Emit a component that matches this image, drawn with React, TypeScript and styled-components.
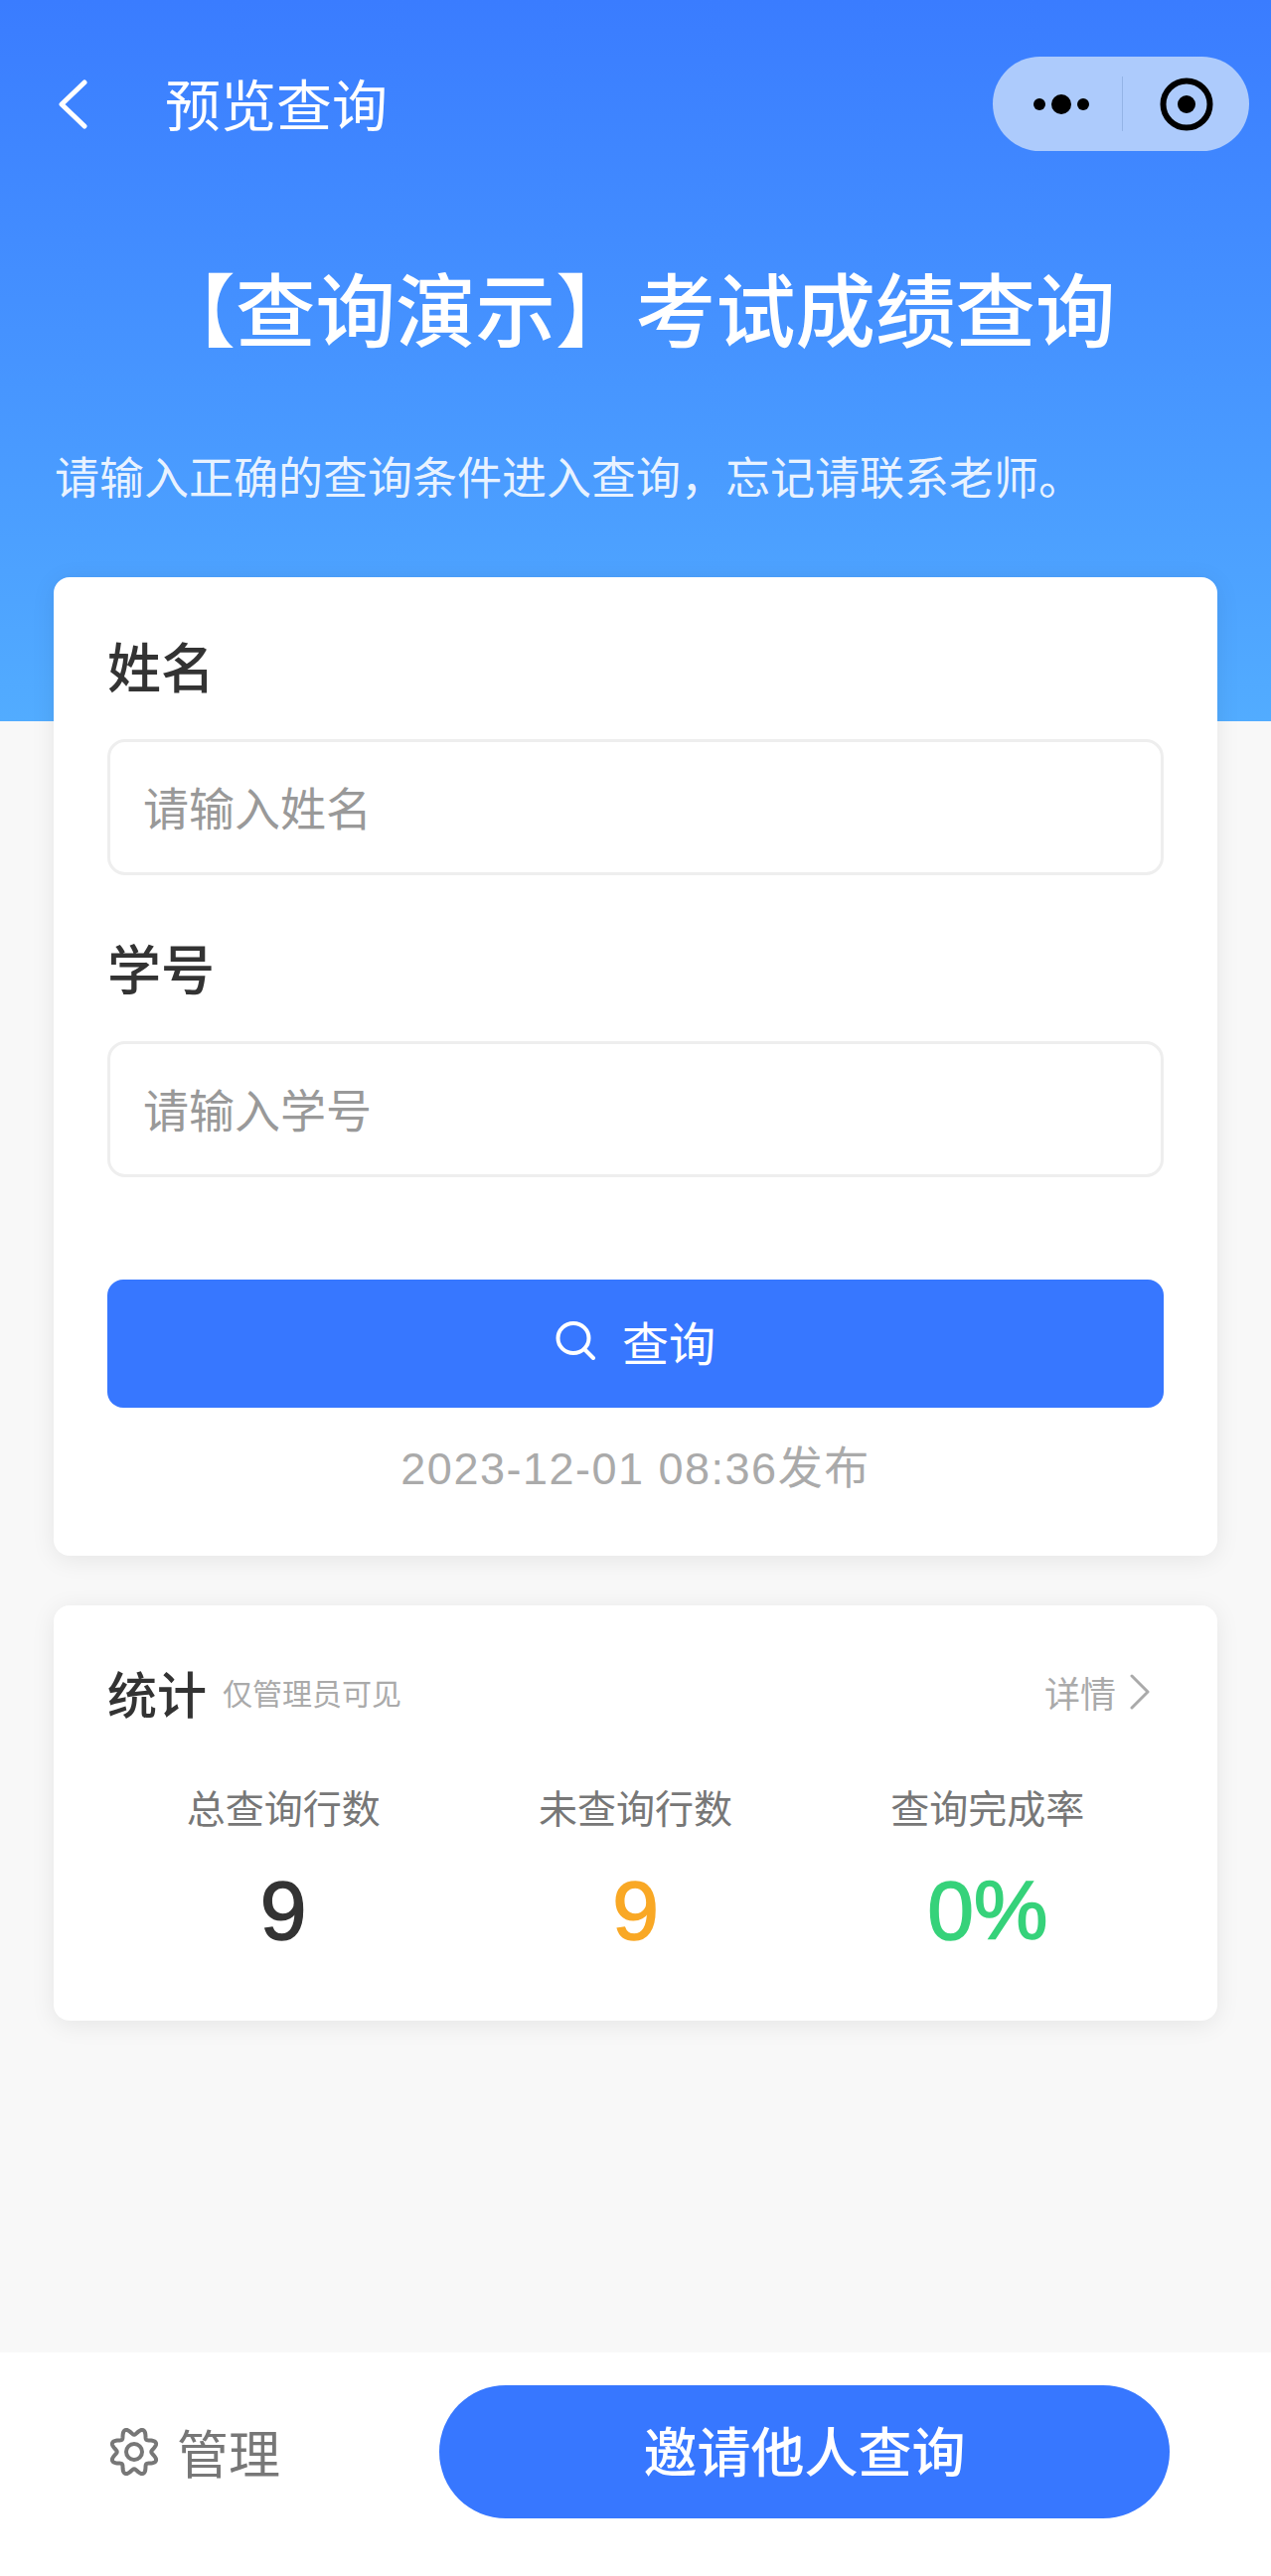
import { FunctionComponent } from "react";
import styled, { createGlobalStyle } from "styled-components";

const GlobalStyle = createGlobalStyle`
  * {
    box-sizing: border-box;
  }
  html,
  body {
    margin: 0;
    padding: 0;
    background: #f8f8f8;
    font-family: "Liberation Sans", "Noto Sans CJK SC", sans-serif;
  }
`;

const stats = [
  { label: "总查询行数", value: "9", color: "#333333" },
  { label: "未查询行数", value: "9", color: "#f9a825" },
  { label: "查询完成率", value: "0%", color: "#36d27a" },
];

// scalloped outline of the gear, eight lobes with a valley at the top
const gearPath = () => {
  const points: string[] = [];
  for (let i = 0; i < 160; i++) {
    const angle = (i / 160) * Math.PI * 2;
    const radius = 20.5 + 3.2 * Math.cos(8 * angle + Math.PI);
    const x = 25 + radius * Math.sin(angle);
    const y = 25 - radius * Math.cos(angle);
    points.push(`${x.toFixed(2)} ${y.toFixed(2)}`);
  }
  return `M${points.join("L")}Z`;
};

const App: FunctionComponent = () => {
  return (
    <Page>
      <GlobalStyle />
      <NavBar>
        <BackIcon viewBox="0 0 32 50">
          <path d="M28 3 L5 25 L28 47" />
        </BackIcon>
        <NavTitle>预览查询</NavTitle>
        <Capsule>
          <svg width="70" height="24" viewBox="0 0 70 24">
            <circle cx="11" cy="12" r="6" />
            <circle cx="33" cy="12" r="10" />
            <circle cx="55" cy="12" r="6" />
          </svg>
          <CapsuleDivider />
          <svg width="54" height="54" viewBox="0 0 54 54">
            <circle cx="27" cy="27" r="23.5" fill="none" stroke="#000" strokeWidth="6" />
            <circle cx="27" cy="27" r="9" />
          </svg>
        </Capsule>
      </NavBar>
      <Title>【查询演示】考试成绩查询</Title>
      <Subtitle>{"请输入正确的查询条件进入查询\uFF0C忘记请联系老师。"}</Subtitle>

      <FormCard>
        <FieldLabel>姓名</FieldLabel>
        <FieldInput placeholder="请输入姓名" />
        <FieldLabel $second>学号</FieldLabel>
        <FieldInput placeholder="请输入学号" />
        <SearchButton>
          <SearchIcon viewBox="0 0 41 39">
            <ellipse cx="18" cy="17" rx="15.5" ry="15" />
            <path d="M29 28 L38 37" />
          </SearchIcon>
          查询
        </SearchButton>
        <PublishTime>2023-12-01 08:36发布</PublishTime>
      </FormCard>

      <StatsCard>
        <StatsHeader>
          <StatsTitle>统计</StatsTitle>
          <StatsHint>仅管理员可见</StatsHint>
          <DetailLink>
            详情
            <DetailIcon viewBox="0 0 20 36">
              <path d="M2 2 L18 18 L2 34" />
            </DetailIcon>
          </DetailLink>
        </StatsHeader>
        <StatsGrid>
          {stats.map((stat) => (
            <StatItem key={stat.label}>
              <StatLabel>{stat.label}</StatLabel>
              <StatValue $color={stat.color}>{stat.value}</StatValue>
            </StatItem>
          ))}
        </StatsGrid>
      </StatsCard>

      <BottomBar>
        <ManageLink>
          <GearIcon viewBox="0 0 50 50">
            <path d={gearPath()} />
            <circle cx="25" cy="25" r="8" />
          </GearIcon>
          管理
        </ManageLink>
        <InviteButton>邀请他人查询</InviteButton>
      </BottomBar>
    </Page>
  );
};

const Page = styled.div`
  display: flex;
  flex-direction: column;
  width: 1279px;
  min-height: 2593px;
  background: linear-gradient(180deg, #3a7cff 0%, #52acff 100%) top / 100% 726px
      no-repeat,
    #f8f8f8;
`;

const NavBar = styled.div`
  display: flex;
  align-items: center;
  height: 95px;
  margin-top: 57px;
  padding: 0 22px 0 57px;
`;

const BackIcon = styled.svg`
  width: 32px;
  height: 50px;
  fill: none;
  stroke: #ffffff;
  stroke-width: 5;
  stroke-linecap: round;
  stroke-linejoin: round;
`;

const NavTitle = styled.div`
  margin-left: 77px;
  padding-top: 6px;
  font-size: 56px;
  line-height: 70px;
  color: #ffffff;
`;

const Capsule = styled.div`
  display: flex;
  align-items: center;
  width: 258px;
  height: 95px;
  margin-left: auto;
  padding-left: 36px;
  border-radius: 48px;
  background: #adcbfc;
`;

const CapsuleDivider = styled.div`
  width: 1px;
  height: 55px;
  margin: 0 37px 0 24px;
  background: #94b4e6;
`;

const Title = styled.h1`
  margin: 113px 0 0;
  font-size: 80.5px;
  font-weight: 500;
  line-height: 100px;
  text-align: center;
  color: #ffffff;
`;

const Subtitle = styled.p`
  margin: 88px 0 0;
  padding-left: 55px;
  font-size: 45px;
  line-height: 60px;
  color: rgba(255, 255, 255, 0.9);
`;

const Card = styled.div`
  margin: 0 54px;
  padding: 0 54px;
  border-radius: 16px;
  background: #ffffff;
  box-shadow: 0 4px 24px rgba(0, 0, 0, 0.08);
`;

const FormCard = styled(Card)`
  display: flex;
  flex-direction: column;
  margin-top: 68px;
  padding-top: 63px;
  padding-bottom: 57px;
`;

const FieldLabel = styled.div<{ $second?: boolean }>`
  margin-top: ${(props) => (props.$second ? "67px" : "0")};
  margin-bottom: 40px;
  font-size: 54px;
  font-weight: 500;
  line-height: 60px;
  color: #333333;
`;

const FieldInput = styled.input`
  width: 100%;
  height: 137px;
  padding: 5px 33px 0;
  border: 3px solid #eeeeee;
  border-radius: 18px;
  outline: none;
  background: #ffffff;
  font-family: inherit;
  font-size: 46px;
  color: #333333;

  &::placeholder {
    color: #999999;
    opacity: 1;
  }
`;

const SearchButton = styled.button`
  display: flex;
  align-items: center;
  justify-content: center;
  gap: 26px;
  width: 100%;
  height: 129px;
  margin-top: 103px;
  padding: 0 0 6px;
  border: 0;
  border-radius: 16px;
  background: #3777ff;
  font-family: inherit;
  font-size: 47px;
  color: #ffffff;
`;

const SearchIcon = styled.svg`
  width: 41px;
  height: 39px;
  fill: none;
  stroke: #ffffff;
  stroke-width: 4;
  stroke-linecap: round;
`;

const PublishTime = styled.div`
  margin-top: 32px;
  font-size: 45px;
  letter-spacing: 1.5px;
  line-height: 60px;
  text-align: center;
  color: #aaaaaa;
`;

const StatsCard = styled(Card)`
  margin-top: 50px;
  padding-top: 57px;
  padding-bottom: 61px;
`;

const StatsHeader = styled.div`
  display: flex;
  align-items: center;
  height: 60px;
`;

const StatsTitle = styled.div`
  font-size: 50px;
  font-weight: 500;
  color: #333333;
`;

const StatsHint = styled.div`
  margin-left: 16px;
  font-size: 30px;
  color: #aaaaaa;
`;

const DetailLink = styled.div`
  display: flex;
  align-items: center;
  gap: 14px;
  margin-left: auto;
  padding-right: 14px;
  font-size: 36px;
  color: #aaaaaa;
`;

const DetailIcon = styled.svg`
  width: 20px;
  height: 36px;
  fill: none;
  stroke: #aaaaaa;
  stroke-width: 3;
  stroke-linecap: round;
  stroke-linejoin: round;
`;

const StatsGrid = styled.div`
  display: grid;
  grid-template-columns: 1fr 1fr 1fr;
  margin-top: 64px;
`;

const StatItem = styled.div`
  display: flex;
  flex-direction: column;
  align-items: center;
`;

const StatLabel = styled.div`
  font-size: 39px;
  line-height: 50px;
  color: #777777;
`;

const StatValue = styled.div<{ $color: string }>`
  margin-top: 26px;
  font-size: 84px;
  line-height: 100px;
  color: ${(props) => props.$color};
  -webkit-text-stroke: 1.5px ${(props) => props.$color};
`;

const BottomBar = styled.div`
  display: flex;
  align-items: center;
  justify-content: space-between;
  height: 225px;
  margin-top: auto;
  padding: 0 102px 26px 110px;
  background: #ffffff;
`;

const ManageLink = styled.div`
  display: flex;
  align-items: center;
  gap: 18px;
  font-size: 52px;
  color: #777777;
`;

const GearIcon = styled.svg`
  width: 50px;
  height: 50px;
  fill: none;
  stroke: #777777;
  stroke-width: 4;
`;

const InviteButton = styled.button`
  width: 735px;
  height: 134px;
  padding: 0 0 4px;
  border: 0;
  border-radius: 67px;
  background: #3777ff;
  font-family: inherit;
  font-size: 54px;
  font-weight: 500;
  color: #ffffff;
`;

export default App;
